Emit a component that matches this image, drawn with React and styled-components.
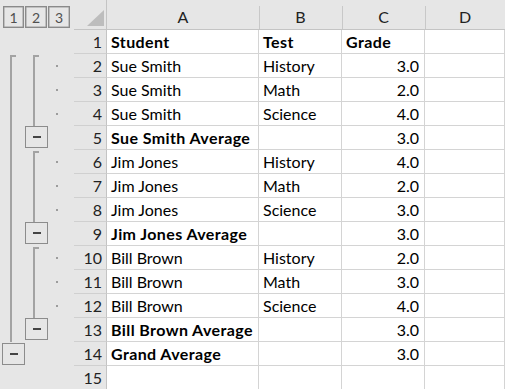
import React from "react";
import styled, { createGlobalStyle } from "styled-components";

const GlobalStyle = createGlobalStyle`
  html, body { margin: 0; padding: 0; background: #e6e6e6; }
  * { box-sizing: border-box; }
`;

const Sheet = styled.div`
  display: grid;
  grid-template-columns: 23px 23px 28px 33px 152px 83px 83px 80px;
  grid-template-rows: 30px repeat(15, 24px);
  width: 505px;
  height: 389px;
  overflow: hidden;
  background: #e6e6e6;
  font-family: Lato, "Liberation Sans", sans-serif;
`;

const LevelBar = styled.div`
  grid-column: 1 / 4;
  grid-row: 1;
  display: flex;
  gap: 1px;
  padding: 6px 0 0 3px;
  align-items: flex-start;
`;

const LevelButton = styled.div`
  width: ${p => p.w}px;
  height: 22px;
  border: 1px solid #8a8a8a;
  box-shadow: inset 0 0 0 0.5px #9a9a9a;
  display: flex;
  align-items: center;
  justify-content: center;
  font-size: 14px;
  font-weight: 400;
  color: #505050;
`;

const Corner = styled.div`
  grid-column: 4;
  grid-row: 1;
  border-right: 1px solid #c4c4c4;
  border-bottom: 1px solid #c4c4c4;
  display: flex;
  align-items: flex-end;
  justify-content: flex-end;
  padding: 0 2px 3px 0;
`;

const ColHeader = styled.div`
  grid-row: 1;
  grid-column: ${p => p.col};
  display: flex;
  align-items: flex-end;
  justify-content: center;
  padding-bottom: 3px;
  font-size: 16px;
  color: #222;
  border-bottom: 1px solid #c4c4c4;
  position: relative;
  &::after {
    content: "";
    position: absolute;
    right: -1px;
    top: 6px;
    bottom: 0;
    width: 1px;
    background: #c8c8c8;
  }
`;

const RowHeader = styled.div`
  grid-column: 4;
  grid-row: ${p => p.row};
  border-bottom: 1px solid #d0d0d0;
  border-right: 1px solid #c4c4c4;
  display: flex;
  align-items: center;
  justify-content: flex-end;
  padding-right: 4px;
  font-size: 16px;
  color: #222;
`;

const Cell = styled.div`
  grid-column: ${p => p.col};
  grid-row: ${p => p.row};
  background: #fff;
  border-right: 1px solid #d4d4d4;
  border-bottom: 1px solid #d4d4d4;
  display: flex;
  align-items: center;
  justify-content: ${p => (p.right ? "flex-end" : "flex-start")};
  padding: 0 5px 0 4px;
  font-size: 16px;
  font-weight: ${p => (p.bold ? 700 : 400)};
  letter-spacing: ${p => (p.bold ? "0.4px" : "0")};
  color: #000;
  white-space: nowrap;
  overflow: ${p => (p.spill ? "visible" : "hidden")};
  position: relative;
  z-index: ${p => (p.spill ? 1 : 0)};
`;

const Bracket = styled.div`
  grid-column: ${p => p.col};
  grid-row: ${p => p.from} / ${p => p.to};
  margin: 1px 0 0 10px;
  width: 6px;
  border-left: 2px solid #a3a3a3;
  border-top: 2px solid #a3a3a3;
`;

const Collapse = styled.div`
  grid-column: ${p => p.col};
  grid-row: ${p => p.row};
  margin: ${p => (p.col === 1 ? "1px 0 0 2px" : "0 0 0 2px")};
  width: 23px;
  height: 22px;
  border: 1px solid #8c8c8c;
  display: flex;
  align-items: center;
  justify-content: center;
  &::before {
    content: "";
    width: 8px;
    height: 2px;
    background: #444;
  }
`;

const Dot = styled.div`
  grid-column: 3;
  grid-row: ${p => p.row};
  align-self: center;
  width: 2px;
  height: 2px;
  margin: 0 0 0 10px;
  background: #9c9c9c;
`;

const rows = [
  ["Student", "Test", "Grade", true],
  ["Sue Smith", "History", "3.0"],
  ["Sue Smith", "Math", "2.0"],
  ["Sue Smith", "Science", "4.0"],
  ["Sue Smith Average", "", "3.0", true],
  ["Jim Jones", "History", "4.0"],
  ["Jim Jones", "Math", "2.0"],
  ["Jim Jones", "Science", "3.0"],
  ["Jim Jones Average", "", "3.0", true],
  ["Bill Brown", "History", "2.0"],
  ["Bill Brown", "Math", "3.0"],
  ["Bill Brown", "Science", "4.0"],
  ["Bill Brown Average", "", "3.0", true],
  ["Grand Average", "", "3.0", true],
  ["", "", ""],
];

const detailRows = [2, 3, 4, 6, 7, 8, 10, 11, 12];

export default function App() {
  return (
    <>
      <GlobalStyle />
      <Sheet>
        <LevelBar>
          <LevelButton w={21}>1</LevelButton>
          <LevelButton w={22}>2</LevelButton>
          <LevelButton w={22}>3</LevelButton>
        </LevelBar>
        <Corner>
          <svg width="17" height="16" viewBox="0 0 17 16">
            <polygon points="17,0 17,16 0,16" fill="#bdbdbd" />
          </svg>
        </Corner>
        {["A", "B", "C", "D"].map((l, i) => (
          <ColHeader key={l} col={i + 5}>{l}</ColHeader>
        ))}

        <Bracket col={1} from={3} to={15} />
        <Collapse col={1} row={15} />
        <Bracket col={2} from={3} to={6} />
        <Collapse col={2} row={6} />
        <Bracket col={2} from={7} to={10} />
        <Collapse col={2} row={10} />
        <Bracket col={2} from={11} to={14} />
        <Collapse col={2} row={14} />
        {detailRows.map(r => (
          <Dot key={r} row={r + 1} />
        ))}

        {rows.map(([a, b, c, bold], i) => {
          const row = i + 2;
          return (
            <React.Fragment key={row}>
              <RowHeader row={row}>{i + 1}</RowHeader>
              <Cell col={5} row={row} bold={bold} spill={!b}>{a}</Cell>
              <Cell col={6} row={row} bold={i === 0}>{b}</Cell>
              <Cell col={7} row={row} bold={i === 0} right={i > 0}>{c}</Cell>
              <Cell col={8} row={row} />
            </React.Fragment>
          );
        })}
      </Sheet>
    </>
  );
}
